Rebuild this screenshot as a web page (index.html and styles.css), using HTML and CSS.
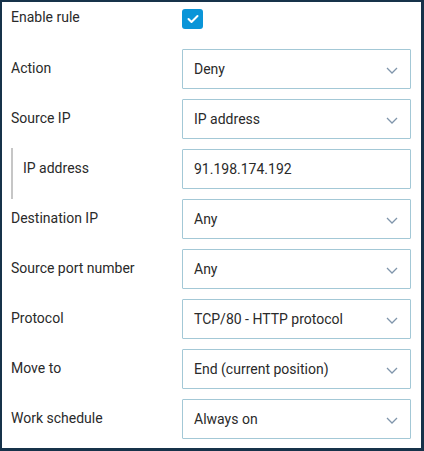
FILE: index.html
```html
<!DOCTYPE html>
<html>
<head>
<meta charset="utf-8">
<link rel="stylesheet" href="styles.css">
</head>
<body>
<div class="frame">
  <div class="row row-check">
    <div class="label">Enable rule</div>
    <div class="checkbox"><svg width="12" height="10" viewBox="0 0 12 10"><path d="M1.5 5 L4.5 8 L10.5 2" fill="none" stroke="#fff" stroke-width="2" stroke-linecap="round" stroke-linejoin="round"/></svg></div>
  </div>
  <div class="rows">
    <div class="row">
      <div class="label">Action</div>
      <div class="field select"><span>Deny</span><svg class="chev" width="12" height="7" viewBox="0 0 12 7"><path d="M1 1 L6 6 L11 1" fill="none" stroke="#7f95ab" stroke-width="1.3"/></svg></div>
    </div>
    <div class="row">
      <div class="label">Source IP</div>
      <div class="field select"><span>IP address</span><svg class="chev" width="12" height="7" viewBox="0 0 12 7"><path d="M1 1 L6 6 L11 1" fill="none" stroke="#7f95ab" stroke-width="1.3"/></svg></div>
    </div>
    <div class="row">
      <div class="label sub">IP address</div>
      <div class="field"><span>91.198.174.192</span></div>
    </div>
    <div class="row">
      <div class="label">Destination IP</div>
      <div class="field select"><span>Any</span><svg class="chev" width="12" height="7" viewBox="0 0 12 7"><path d="M1 1 L6 6 L11 1" fill="none" stroke="#7f95ab" stroke-width="1.3"/></svg></div>
    </div>
    <div class="row">
      <div class="label">Source port number</div>
      <div class="field select"><span>Any</span><svg class="chev" width="12" height="7" viewBox="0 0 12 7"><path d="M1 1 L6 6 L11 1" fill="none" stroke="#7f95ab" stroke-width="1.3"/></svg></div>
    </div>
    <div class="row">
      <div class="label">Protocol</div>
      <div class="field select"><span>TCP/80 - HTTP protocol</span><svg class="chev" width="12" height="7" viewBox="0 0 12 7"><path d="M1 1 L6 6 L11 1" fill="none" stroke="#7f95ab" stroke-width="1.3"/></svg></div>
    </div>
    <div class="row">
      <div class="label">Move to</div>
      <div class="field select"><span>End (current position)</span><svg class="chev" width="12" height="7" viewBox="0 0 12 7"><path d="M1 1 L6 6 L11 1" fill="none" stroke="#7f95ab" stroke-width="1.3"/></svg></div>
    </div>
    <div class="row">
      <div class="label">Work schedule</div>
      <div class="field select"><span>Always on</span><svg class="chev" width="12" height="7" viewBox="0 0 12 7"><path d="M1 1 L6 6 L11 1" fill="none" stroke="#7f95ab" stroke-width="1.3"/></svg></div>
    </div>
  </div>
</div>
</body>
</html>
```
FILE: styles.css
```css
html, body {
  margin: 0;
  padding: 0;
  background: #ffffff;
}
.frame {
  box-sizing: border-box;
  width: 424px;
  height: 451px;
  border-style: solid;
  border-color: #16324a;
  border-width: 2px 3px 3px 2px;
  background: #ffffff;
  padding: 0 10px 0 9px;
  font-family: Roboto, "Liberation Sans", sans-serif;
  font-size: 14px;
  color: #2a2a2a;
}
.row {
  display: grid;
  grid-template-columns: 171px 229px;
  align-items: center;
  height: 40px;
}
.row-check {
  height: 47px;
  align-items: start;
}
.row-check .label {
  padding-top: 5px;
  line-height: 20px;
}
.checkbox {
  margin-top: 7px;
  width: 21px;
  height: 20px;
  border-radius: 3px;
  background: #0a95d8;
  display: flex;
  align-items: center;
  justify-content: center;
}
.rows {
  display: flex;
  flex-direction: column;
  gap: 10px;
}
.label {
  line-height: 20px;
  padding-bottom: 2px;
}
.label.sub {
  align-self: stretch;
  display: flex;
  align-items: center;
  margin: -1px 0 -10px 0;
  padding-left: 10px;
  border-left: 2px solid #c6c6c6;
  padding-bottom: 12px;
}
.field {
  box-sizing: border-box;
  height: 40px;
  border: 1px solid #a3c8d6;
  border-radius: 1px;
  display: flex;
  align-items: center;
  justify-content: space-between;
  padding: 0 12px 1px 11px;
}
.chev {
  display: block;
  margin-top: 3px;
}
```
